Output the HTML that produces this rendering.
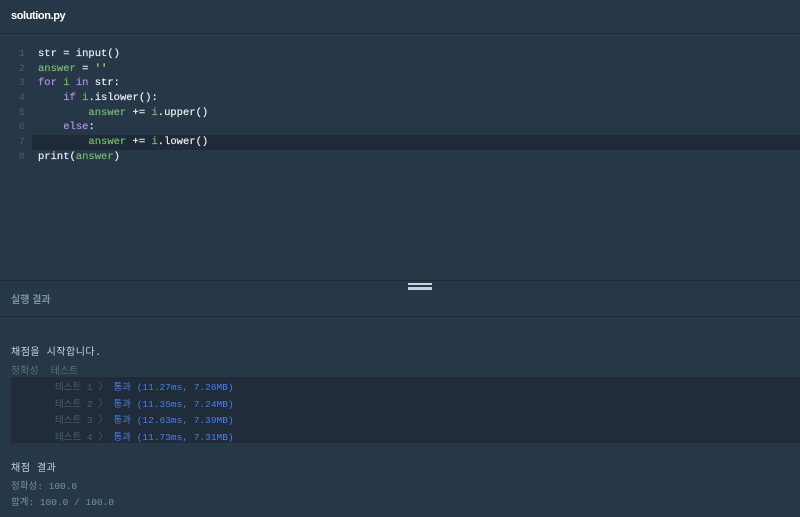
<!DOCTYPE html>
<html><head><meta charset="utf-8"><style>
*{margin:0;padding:0;box-sizing:border-box}
body{width:800px;height:517px;background:#263747;font-family:"Liberation Mono","Noto Sans CJK KR",monospace;overflow:hidden;position:relative}
.hdr{position:absolute;left:0;top:0;width:800px;height:34px;border-bottom:1px solid #1e2b38;background:#263747}
.hdr span{position:absolute;left:11px;top:10px;font:bold 11px "Liberation Sans",sans-serif;color:#fff;letter-spacing:-0.4px}
.code{position:absolute;left:0;top:47px;width:800px}
.ln{height:14.7px;line-height:14.7px;font-size:10.5px;color:#e8edf2;white-space:pre;position:relative;-webkit-text-stroke:0.2px currentColor}
.ln b{font-weight:normal;display:inline-block;width:38px;text-align:right;padding-right:13px;color:#4a5b6c;-webkit-text-stroke:0}
.ln.hl{background:#1e2a37;margin-left:32px}
.ln.hl b{margin-left:-32px}
.g{color:#78b86b}.p{color:#b08ee0}.y{color:#e5c07b}
.div{position:absolute;left:0;top:280px;width:800px;height:1px;background:#1e2b38}
.handle{position:absolute;left:408px;top:283px;width:24px;height:7px;border-top:2px solid #c8d2dc;border-bottom:2px solid #c8d2dc}
.handle:after{content:"";position:absolute;left:0;top:1.5px;width:24px;height:1px;background:#c8d2dc}
.rh{position:absolute;left:0;top:281px;width:800px;height:36px;border-bottom:1px solid #1e2b38}
.rh span{position:absolute;left:11px;top:10px;font:bold 10px "Liberation Sans","Noto Sans CJK KR",sans-serif;color:#78909f}
.t{position:absolute;font-size:9.5px;white-space:pre}
.box{position:absolute;left:11px;top:377px;width:789px;height:66px;background:#202c3a}
.row{position:absolute;left:55px;font-size:9.5px;white-space:pre;color:#4c5d6d}
.row i{font-style:normal;color:#4a7ee8}
</style></head><body>
<div class="hdr"><span>solution.py</span></div>
<div class="code">
<div class="ln"><b>1</b>str = input()</div>
<div class="ln"><b>2</b><span class="g">answer</span> = <span class="y">''</span></div>
<div class="ln"><b>3</b><span class="p">for</span> <span class="g">i</span> <span class="p">in</span> str:</div>
<div class="ln"><b>4</b>    <span class="p">if</span> <span class="g">i</span>.islower():</div>
<div class="ln"><b>5</b>        <span class="g">answer</span> += <span class="g">i</span>.upper()</div>
<div class="ln"><b>6</b>    <span class="p">else</span>:</div>
<div class="ln hl"><b>7</b>        <span class="g">answer</span> += <span class="g">i</span>.lower()</div>
<div class="ln"><b>8</b>print(<span class="g">answer</span>)</div>
</div>
<div class="div"></div>
<div class="rh"><span>실행 결과</span></div>
<div class="handle"></div>
<div class="t" style="left:11px;top:343px;color:#c8d2dc;font-size:10px;letter-spacing:0.5px">채점을 시작합니다.</div>
<div class="t" style="left:11px;top:362px;color:#5c6e7e;font-size:10px">정확성  테스트</div>
<div class="box"></div>
<div class="row" style="top:379px">테스트 1 〉 <i>통과 (11.27ms, 7.26MB)</i></div>
<div class="row" style="top:396px">테스트 2 〉 <i>통과 (11.35ms, 7.24MB)</i></div>
<div class="row" style="top:412px">테스트 3 〉 <i>통과 (12.63ms, 7.39MB)</i></div>
<div class="row" style="top:429px">테스트 4 〉 <i>통과 (11.73ms, 7.31MB)</i></div>
<div class="t" style="left:11px;top:459px;color:#c8d2dc;font-size:10px;letter-spacing:0.5px">채점 결과</div>
<div class="t" style="left:11px;top:478px;color:#78909f">정확성: 100.0</div>
<div class="t" style="left:11px;top:494px;color:#78909f">합계: 100.0 / 100.0</div>
</body></html>
